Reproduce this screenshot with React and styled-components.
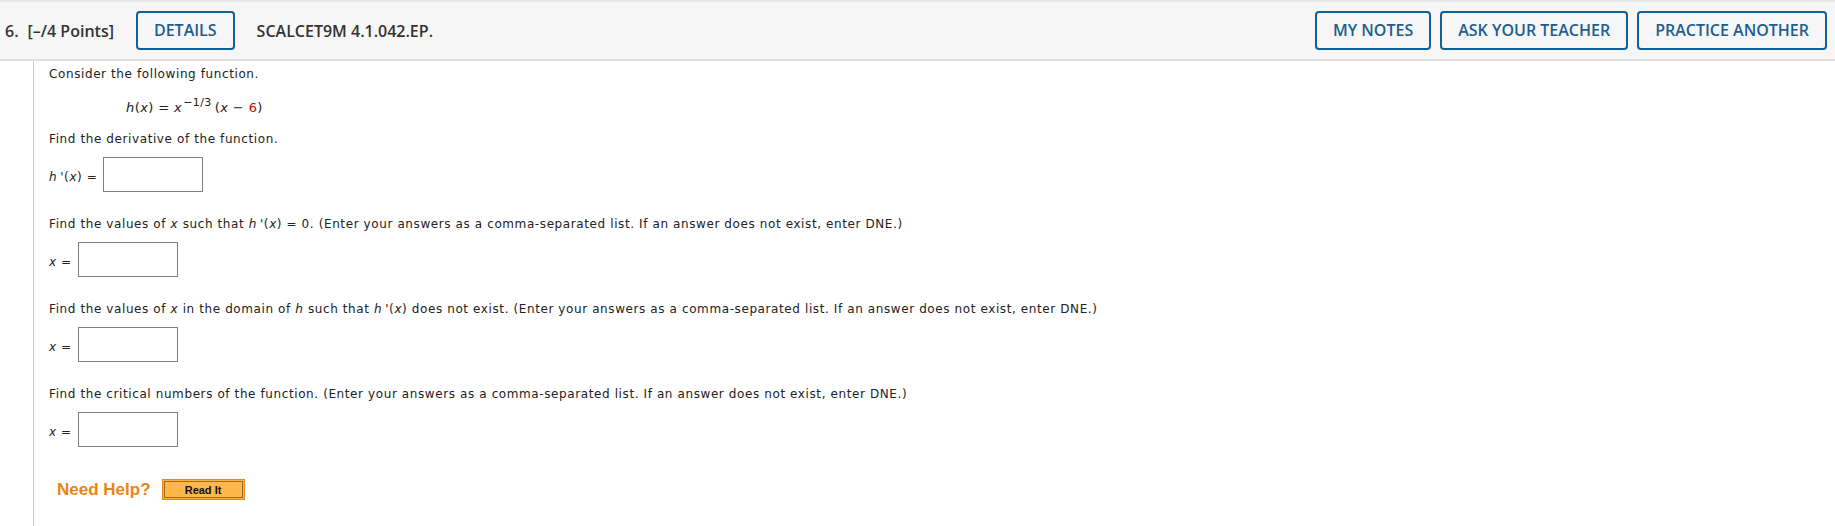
import React from "react";
import styled, { createGlobalStyle } from "styled-components";

const BODY_FONT = `"DejaVu Sans", Verdana, sans-serif`;

const Global = createGlobalStyle`
  html, body { margin: 0; padding: 0; background: #fff; }
  body { font-family: ${BODY_FONT}; color: #222; }
  * { box-sizing: border-box; }
`;

const Page = styled.div`
  width: 1835px;
  height: 526px;
  display: flex;
  flex-direction: column;
  overflow: hidden;
`;

const Header = styled.header`
  display: flex;
  align-items: center;
  height: 61px;
  padding: 0 8px 0 5px;
  background: #f6f6f6;
  border-top: 2px solid #e6e6e6;
  border-bottom: 2px solid #dedede;
  font-family: "Open Sans", "Liberation Sans", sans-serif;
  font-size: 16px;
  font-weight: 600;
  color: #333;
`;

const Num = styled.span`
  margin-right: 9px;
`;

const Points = styled.span`
  margin-right: 22px;
`;

const Code = styled.span`
  margin-left: 22px;
  color: #333;
`;

const RightGroup = styled.div`
  margin-left: auto;
  display: flex;
  gap: 9px;
`;

const HeadButton = styled.button`
  height: 39px;
  padding: 0 16px;
  margin-top: -1px;
  background: transparent;
  border: 2px solid #10609a;
  border-radius: 4px;
  font-family: "Open Sans", "Liberation Sans", sans-serif;
  font-size: 16px;
  font-weight: 600;
  color: #1d5e91;
  cursor: pointer;
`;

const Body = styled.main`
  flex: 1;
  margin-left: 33px;
  border-left: 1px solid #cfcfcf;
  padding: 5px 0 0 15px;
  display: flex;
  flex-direction: column;
  align-items: flex-start;
  font-family: ${BODY_FONT};
`;

const Para = styled.p`
  margin: ${(p) => p.$mt || 0}px 0 0;
  font-family: ${BODY_FONT};
  font-size: 12px;
  letter-spacing: 0.6px;
  line-height: 16px;
  color: #222;
`;

const MathLine = styled.div`
  margin: 16px 0 0 77px;
  font-family: ${BODY_FONT};
  font-size: 13px;
  letter-spacing: 0.4px;
  line-height: 20px;
  color: #222;
`;

const Var = styled.i`
  font-style: italic;
`;

const Sup = styled.sup`
  font-size: 11px;
  vertical-align: 6px;
  line-height: 0;
  margin: 0 3px 0 1px;
`;

const Red = styled.span`
  color: #d40000;
`;

const AnswerRow = styled.div`
  margin-top: ${(p) => p.$mt || 10}px;
  display: flex;
  align-items: center;
  gap: 6px;
  font-family: ${BODY_FONT};
  font-size: 12px;
  letter-spacing: 0.6px;
`;

const Label = styled.span`
  padding-top: 4px;
  white-space: pre;
`;

const AnswerBox = styled.input`
  width: 100px;
  height: 35px;
  border: 1px solid #808080;
  border-radius: 0;
  background: #fff;
  padding: 0 4px;
  font-size: 12px;
`;

const HelpRow = styled.div`
  margin: 32px 0 0 8px;
  display: flex;
  align-items: center;
  gap: 11px;
`;

const NeedHelp = styled.span`
  font-family: "Liberation Sans", Arial, sans-serif;
  font-weight: bold;
  font-size: 17px;
  line-height: 21px;
  color: #ee8412;
`;

const ReadIt = styled.button`
  width: 83px;
  height: 21px;
  padding: 1px;
  border: 1px solid #e08d25;
  background: #fbb244;
  cursor: pointer;
  display: flex;
`;

const ReadItInner = styled.span`
  flex: 1;
  display: flex;
  align-items: center;
  justify-content: center;
  border: 1px solid #a46a1c;
  background: #fdb74a;
  font-family: "Liberation Sans", Arial, sans-serif;
  font-weight: bold;
  font-size: 11px;
  color: #111;
`;

const Prime = () => (
  <>
    <Var>h</Var>&thinsp;'(<Var>x</Var>)
  </>
);

export default function App() {
  return (
    <>
      <Global />
      <Page>
        <Header>
          <Num>6.</Num>
          <Points>[–/4 Points]</Points>
          <HeadButton>DETAILS</HeadButton>
          <Code>SCALCET9M 4.1.042.EP.</Code>
          <RightGroup>
            <HeadButton>MY NOTES</HeadButton>
            <HeadButton>ASK YOUR TEACHER</HeadButton>
            <HeadButton>PRACTICE ANOTHER</HeadButton>
          </RightGroup>
        </Header>
        <Body>
          <Para>Consider the following function.</Para>
          <MathLine>
            <Var>h</Var>(<Var>x</Var>) = <Var>x</Var>
            <Sup>−1/3</Sup>(<Var>x</Var> − <Red>6</Red>)
          </MathLine>
          <Para $mt={13}>Find the derivative of the function.</Para>
          <AnswerRow>
            <Label>
              <Prime /> =
            </Label>
            <AnswerBox />
          </AnswerRow>
          <Para $mt={24}>
            Find the values of <Var>x</Var> such that <Prime /> = 0. (Enter your answers as a
            comma-separated list. If an answer does not exist, enter DNE.)
          </Para>
          <AnswerRow>
            <Label>
              <Var>x</Var> =
            </Label>
            <AnswerBox />
          </AnswerRow>
          <Para $mt={24}>
            Find the values of <Var>x</Var> in the domain of <Var>h</Var> such that <Prime /> does
            not exist. (Enter your answers as a comma-separated list. If an answer does not exist,
            enter DNE.)
          </Para>
          <AnswerRow>
            <Label>
              <Var>x</Var> =
            </Label>
            <AnswerBox />
          </AnswerRow>
          <Para $mt={24}>
            Find the critical numbers of the function. (Enter your answers as a comma-separated
            list. If an answer does not exist, enter DNE.)
          </Para>
          <AnswerRow>
            <Label>
              <Var>x</Var> =
            </Label>
            <AnswerBox />
          </AnswerRow>
          <HelpRow>
            <NeedHelp>Need Help?</NeedHelp>
            <ReadIt>
              <ReadItInner>Read It</ReadItInner>
            </ReadIt>
          </HelpRow>
        </Body>
      </Page>
    </>
  );
}
